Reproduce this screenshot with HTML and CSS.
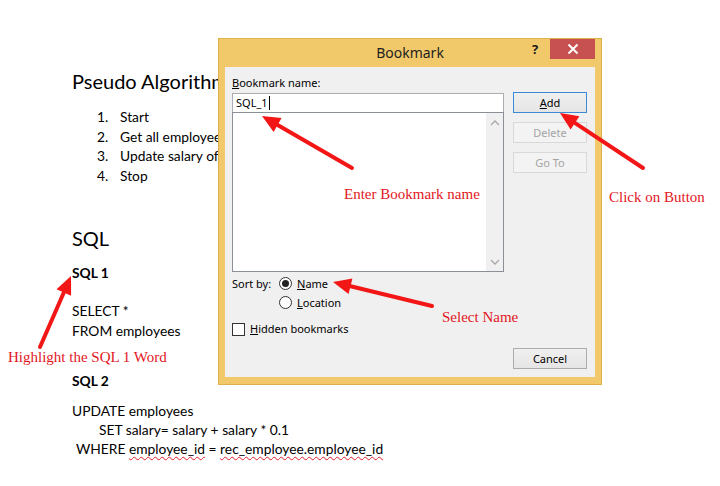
FILE: index.html
```html
<!DOCTYPE html>
<html>
<head>
<meta charset="utf-8">
<link rel="stylesheet" href="styles.css">
</head>
<body>
<div class="doc">
  <h1 class="h1">Pseudo Algorithm</h1>
  <ol class="steps">
    <li><span class="n">1.</span><span>Start</span></li>
    <li><span class="n">2.</span><span>Get all employees</span></li>
    <li><span class="n">3.</span><span>Update salary of each employee</span></li>
    <li><span class="n">4.</span><span>Stop</span></li>
  </ol>
  <h2 class="h2">SQL</h2>
  <p class="sub">SQL 1</p>
  <div class="code first">
    <div>SELECT *</div>
    <div>FROM employees</div>
  </div>
  <p class="sub second">SQL 2</p>
  <div class="code upd">
    <div>UPDATE employees</div>
    <div class="ind">SET salary= salary + salary * 0.1</div>
    <div class="where">WHERE <span class="sp">employee_id</span> = <span class="sp">rec_employee.employee_id</span></div>
  </div>
</div>

<div class="dialog">
  <div class="titlebar">
    <div></div>
    <div class="title">Bookmark</div>
    <div class="ctrls">
      <span class="help">?</span>
      <span class="close"><svg width="12" height="12" viewBox="0 0 12 12"><path d="M1.5 1.5 L10.5 10.5 M10.5 1.5 L1.5 10.5" stroke="#fff" stroke-width="2" fill="none"/></svg></span>
    </div>
  </div>
  <div class="client">
    <div class="leftcol">
      <div class="lbl"><u>B</u>ookmark name:</div>
      <div class="input">SQL_1<span class="caret"></span></div>
      <div class="list">
        <div class="scroll">
          <svg width="10" height="6" viewBox="0 0 10 6"><path d="M1 5 L5 1 L9 5" stroke="#a8a8a8" stroke-width="1.3" fill="none"/></svg>
          <svg width="10" height="6" viewBox="0 0 10 6"><path d="M1 1 L5 5 L9 1" stroke="#a8a8a8" stroke-width="1.3" fill="none"/></svg>
        </div>
      </div>
      <div class="sort">
        <div class="sortlbl">Sort by:</div>
        <div class="opts">
          <div class="opt"><span class="radio on"></span><span><u>N</u>ame</span></div>
          <div class="opt"><span class="radio"></span><span><u>L</u>ocation</span></div>
        </div>
      </div>
      <div class="chk"><span class="box"></span><span><u>H</u>idden bookmarks</span></div>
    </div>
    <div class="rightcol">
      <div class="btn def"><u>A</u>dd</div>
      <div class="btn dis">Delete</div>
      <div class="btn dis">Go To</div>
      <div class="btn cancel">Cancel</div>
    </div>
  </div>
</div>

<svg class="arrows" width="720" height="486" viewBox="0 0 720 486">
  <g stroke="#f21616" stroke-width="4" stroke-linecap="round" fill="none">
    <line x1="352" y1="168" x2="275.9" y2="124"/>
    <line x1="643" y1="168" x2="573.3" y2="121.8"/>
    <line x1="432" y1="306" x2="348.6" y2="285.8"/>
    <line x1="40" y1="347" x2="64.6" y2="290.7"/>
  </g>
  <g fill="#f21616">
    <polygon points="262,116 281.6,118.1 273.6,131.9"/>
    <polygon points="560,113 579.4,116.2 570.6,129.6"/>
    <polygon points="333,282 352.4,278.4 348.6,294"/>
    <polygon points="71,276 71.1,295.7 56.5,289.3"/>
  </g>
</svg>

<div class="note n-enter">Enter Bookmark name</div>
<div class="note n-click">Click on Button</div>
<div class="note n-select">Select Name</div>
<div class="note n-high">Highlight the SQL 1 Word</div>
</body>
</html>
```

FILE: styles.css
```css
html, body {
  margin: 0;
  padding: 0;
}
body {
  width: 720px;
  height: 486px;
  position: relative;
  overflow: hidden;
  background: #fff;
  color: #000;
  font-family: Lato, "Noto Sans", sans-serif;
}

/* document */
.doc {
  padding: 69px 0 0 72px;
  font-size: 13.8px;
}
.h1, .h2 {
  font-size: 20px;
  line-height: 24px;
  font-weight: normal;
  margin: 0;
}
.h1 { margin-bottom: 14px; white-space: nowrap; }
.steps {
  list-style: none;
  margin: 0;
  padding: 0 0 0 25px;
  line-height: 19.5px;
}
.steps li { display: flex; white-space: nowrap; }
.steps .n { width: 23px; }
.h2 { margin-top: 41px; margin-bottom: 13px; }
.sub {
  margin: 0;
  font-weight: bold;
  line-height: 20px;
}
.code { line-height: 20px; }
.code.first { margin-top: 18px; }
.sub.second { margin-top: 30px; }
.code.upd { margin-top: 10px; line-height: 19px; }
.ind { padding-left: 27px; }
.where { padding-left: 4px; white-space: nowrap; }
.sp {
  text-decoration: underline wavy #e0202a;
  text-decoration-thickness: 1px;
  text-underline-offset: 2px;
}

/* dialog */
.dialog {
  position: absolute;
  left: 218px;
  top: 38px;
  width: 384px;
  height: 347px;
  box-sizing: border-box;
  background: #f1c96b;
  border: 1px solid #ddb04c;
  padding: 0 6px 7px;
  display: flex;
  flex-direction: column;
  font-family: "Noto Sans", "Open Sans", sans-serif;
  font-size: 11px;
  color: #000;
}
.titlebar {
  height: 28px;
  display: grid;
  grid-template-columns: 1fr auto 1fr;
}
.title {
  font-size: 14px;
  line-height: 28px;
  color: #1e1e1e;
}
.ctrls {
  justify-self: end;
  display: flex;
  align-items: flex-start;
}
.help {
  width: 30px;
  height: 20px;
  line-height: 20px;
  text-align: center;
  font-weight: bold;
  font-size: 13px;
  color: #1a1a1a;
}
.close {
  width: 45px;
  height: 20px;
  background: #c75050;
  display: flex;
  align-items: center;
  justify-content: center;
}
.client {
  flex: 1;
  background: #f0f0f0;
  display: grid;
  grid-template-columns: 272px 74px;
  column-gap: 9px;
  padding: 8px 8px 8px 7px;
}
.leftcol { display: flex; flex-direction: column; }
.lbl { line-height: 16px; height: 16px; }
.input {
  margin-top: 2px;
  height: 19px;
  box-sizing: border-box;
  border: 1px solid #abadb3;
  border-bottom: none;
  background: #fff;
  padding: 0 3px;
  line-height: 18px;
  display: flex;
  align-items: center;
}
.caret {
  display: inline-block;
  width: 1px;
  height: 14px;
  background: #000;
  margin-left: 1px;
}
.list {
  height: 160px;
  box-sizing: border-box;
  border: 1px solid #8b8f96;
  background: #fff;
  display: flex;
  justify-content: flex-end;
}
.scroll {
  width: 17px;
  background: #f0f0f0;
  display: flex;
  flex-direction: column;
  justify-content: space-between;
  align-items: center;
  padding: 7px 0 6px;
}
.sort {
  margin-top: 2px;
  display: flex;
}
.sortlbl { width: 47px; line-height: 19px; }
.opt {
  display: flex;
  align-items: center;
  height: 19px;
  gap: 5px;
}
.radio {
  width: 13px;
  height: 13px;
  box-sizing: border-box;
  border: 1px solid #333;
  border-radius: 50%;
  background: #fff;
  display: flex;
  align-items: center;
  justify-content: center;
}
.radio.on::after {
  content: "";
  width: 7px;
  height: 7px;
  border-radius: 50%;
  background: #222;
}
.chk {
  margin-top: 9px;
  display: flex;
  align-items: center;
  gap: 5px;
  line-height: 16px;
}
.box {
  width: 13px;
  height: 13px;
  box-sizing: border-box;
  border: 1px solid #333;
  background: #fff;
}
.rightcol {
  display: flex;
  flex-direction: column;
  gap: 9px;
  padding-top: 17px;
}
.btn {
  height: 21px;
  box-sizing: border-box;
  border: 1px solid #acacac;
  background: linear-gradient(#f0f0f0, #e5e5e5);
  text-align: center;
  line-height: 19px;
}
.btn.def { border-color: #3c8ad6; }
.btn.dis {
  border-color: #d9d9d9;
  background: #f3f3f3;
  color: #a4a4a4;
}
.btn.cancel { margin-top: auto; }

/* annotations */
.arrows {
  position: absolute;
  left: 0;
  top: 0;
  pointer-events: none;
}
.note {
  position: absolute;
  font-family: "Liberation Serif", "Times New Roman", serif;
  font-size: 15px;
  line-height: 18px;
  color: #e2161d;
  white-space: nowrap;
}
.n-enter { left: 344px; top: 185px; }
.n-click { left: 609px; top: 188px; }
.n-select { left: 442px; top: 308px; }
.n-high { left: 8px; top: 348px; }
```
